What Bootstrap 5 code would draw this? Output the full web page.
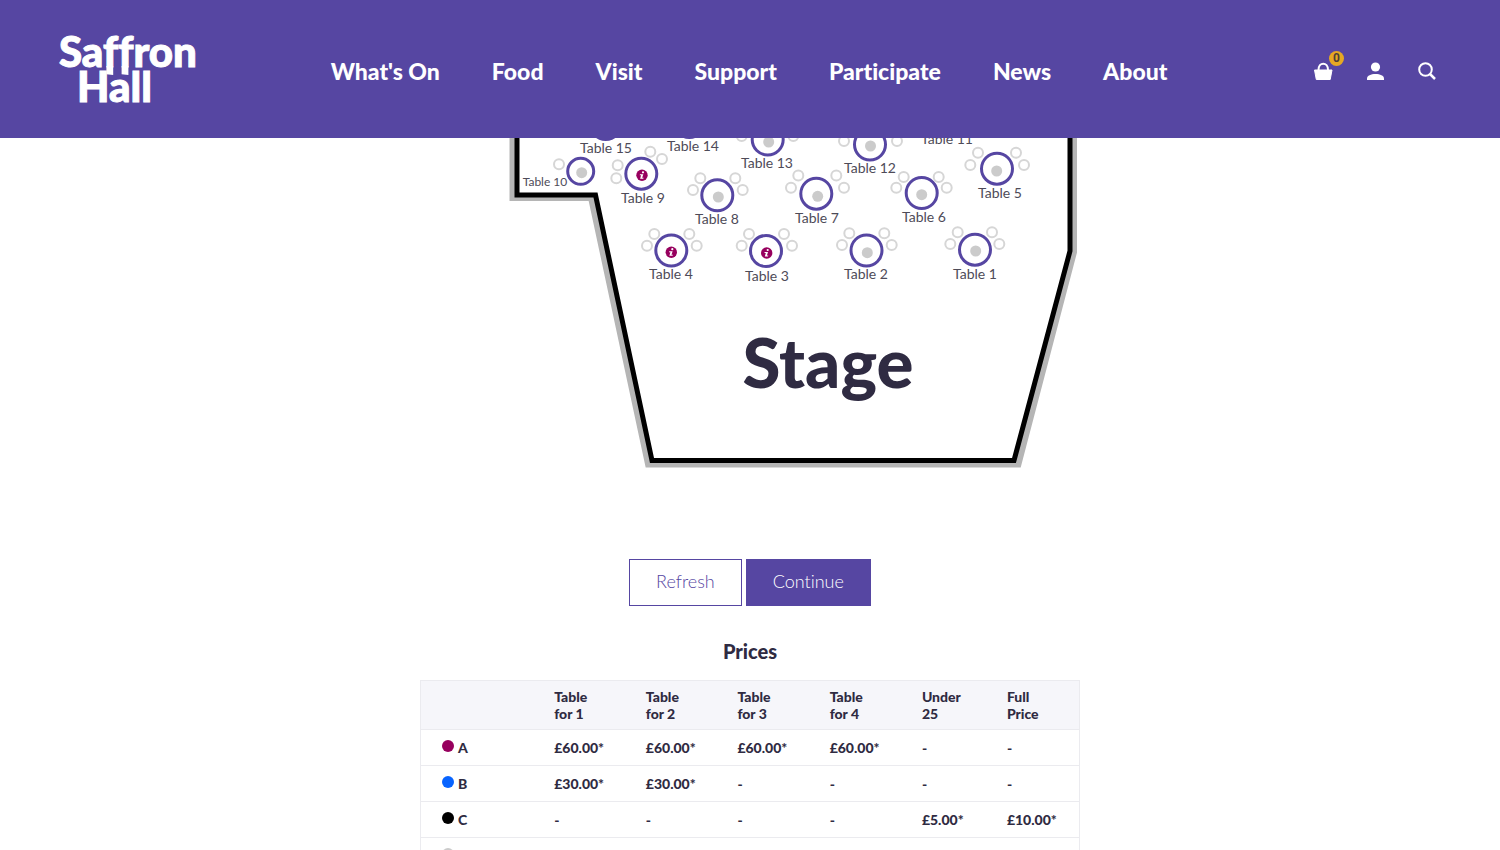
<!DOCTYPE html>
<html lang="en">
<head>
<meta charset="utf-8">
<meta name="viewport" content="width=device-width, initial-scale=1">
<title>Saffron Hall – Choose seats</title>
<link href="https://cdn.jsdelivr.net/npm/bootstrap@5.3.0/dist/css/bootstrap.min.css" rel="stylesheet">
<style>
  :root { --brand: #5646a2; --ink: #2f2b42; }
  body { font-family: Lato, "Liberation Sans", sans-serif; font-variant-ligatures: no-common-ligatures; color: var(--ink); }
  .site-header { background: var(--brand); height: 138px; padding: 4px 62px 0 60px; }
  .side { flex: 1 1 0; }
  .brand-logo { width: 142px; height: 80px; overflow: visible; }
  .brand-logo text { font-weight: 900; font-size: 42px; fill: #fff; stroke: #fff; stroke-width: 1; }
  .main-nav { gap: 52px; }
  .main-nav a { color: #fff; font-weight: 900; font-size: 23px; line-height: 28px; text-decoration: none; white-space: nowrap; }
  .tools { gap: 30px; }
  .tools a, .tools button { width: 22px; height: 22px; color: #fff; line-height: 0; }
  .cart-count { left: 17px; top: -9px; width: 15px; height: 15px; background: #e5a823; color: #4d3d3a; font: 700 12px/15px Roboto, sans-serif; }
  .booking { max-width: 660px; }
  .seat-map .edge { fill: none; stroke: #000; stroke-width: 5; }
  .seat-map .shade { fill: none; stroke: #b5b5b5; stroke-width: 7; }
  .seat-map .chairs { fill: #fff; stroke: #d6d6d6; stroke-width: 2; }
  .seat-map .tops { fill: #fff; stroke: var(--brand); stroke-width: 3; }
  .seat-map .dots { fill: #cbcbcb; }
  .seat-map .names { font-size: 14px; fill: #4e4b58; text-anchor: middle; }
  .seat-map .names .tight { font-size: 12px; }
  .seat-map .stage { font-size: 69px; font-weight: 900; fill: var(--ink); text-anchor: middle; }
  .act { height: 47px; padding: 0 26px 2px; font-size: 18px; font-weight: 300; font-variant-ligatures: no-common-ligatures; border: 1px solid #5646a2; border-radius: 0; color: var(--brand); background: #fff; }
  .act.solid { background: var(--brand); color: #fff; }
  .actions { margin-top: 51px; gap: 4px; }
  .prices-title { font-size: 20px; line-height: 24px; font-weight: 900; margin: 33px 0 17px; }
  .price-grid { table-layout: fixed; font-size: 14px; line-height: 17px; font-weight: 900; color: var(--ink); border: 1px solid #ebebef; margin: 0; }
  .price-grid th, .price-grid td { padding: 9px 0 9px 21px; color: var(--ink); font-weight: 900; border-bottom: 1px solid #ebebef; white-space: nowrap; }
  .price-grid thead th { background: #f6f6fa; padding: 7px 0 7px 21px; }
  .swatch { display: inline-block; width: 12px; height: 12px; border-radius: 50%; background: currentColor; margin-right: 4px; vertical-align: 1px; }
  .s-a { color: #97005e; } .s-b { color: #0864ff; } .s-c { color: #000; } .s-d { color: #cbcbcb; }
</style>
</head>
<body>
<header class="site-header fixed-top d-flex align-items-center">
  <div class="side">
    <a href="#" class="d-inline-block" aria-label="Saffron Hall">
      <svg class="brand-logo d-block" viewBox="60 32 142 80"><text x="59" y="71">Saffron</text><text x="77" y="106">Hall</text><path d="M106.400 70h6.800v9l-6.800-.8zM121.600 70h6.800v9l-6.800-.8z" fill="#fff"/></svg>
    </a>
  </div>
  <nav class="main-nav d-flex" aria-label="Main">
    <a href="#">What's On</a><a href="#">Food</a><a href="#">Visit</a><a href="#">Support</a><a href="#">Participate</a><a href="#">News</a><a href="#">About</a>
  </nav>
  <div class="side tools d-flex align-items-center justify-content-end">
    <a href="#" class="position-relative" aria-label="Basket"><svg width="22" height="22" viewBox="0 0 22 22"><path d="M2.500 10h17.500l-1.800 9.500H4.300z" fill="#fff" stroke="#fff" stroke-linejoin="round"/><path d="M6.500 10C6.500 1.500 16 1.500 16 10" fill="none" stroke="#fff" stroke-width="2"/></svg><span class="cart-count position-absolute rounded-circle text-center">0</span></a>
    <a href="#" aria-label="Account"><svg width="22" height="22" viewBox="0 0 22 22"><circle cx="11.500" cy="7" r="4.600" fill="#fff"/><path d="M3 20v-1.500c0-2.800 4-4.500 8.500-4.500s8.500 1.700 8.500 4.500V20z" fill="#fff"/></svg></a>
    <button type="button" class="btn border-0 p-0" aria-label="Search"><svg width="22" height="22" viewBox="0 0 22 22" fill="none" stroke="#fff" stroke-width="2"><circle cx="9.500" cy="9.500" r="6.300"/><path d="M14 14l5 5" stroke-width="2.500"/></svg></button>
  </div>
</header>

<main class="booking container-fluid p-0">
  <svg class="seat-map d-block w-100" viewBox="420 0 660 508" role="img" aria-label="Seating plan">
    <path class="shade" d="M513 90V197.500H591.500L648.500 464H1018L1073.500 252V90"/>
    <path class="edge" d="M517 90V195H595.500L652 460.500H1014L1070 251V90"/>
    <g class="chairs">
      <circle cx="559" cy="164.300" r="5"/>
      <circle cx="617.700" cy="165.300" r="5"/><circle cx="616.300" cy="178.300" r="5"/><circle cx="650.300" cy="151.700" r="5"/><circle cx="662" cy="159" r="5"/>
      <circle cx="693" cy="190" r="5"/><circle cx="700.300" cy="178.300" r="5"/><circle cx="735.300" cy="178.300" r="5"/><circle cx="742.700" cy="190" r="5"/>
      <circle cx="791" cy="187.700" r="5"/><circle cx="798.300" cy="175.500" r="5"/><circle cx="836.300" cy="175.500" r="5"/><circle cx="844" cy="187.700" r="5"/>
      <circle cx="896.300" cy="187.700" r="5"/><circle cx="903.700" cy="177" r="5"/><circle cx="938.700" cy="177" r="5"/><circle cx="946.700" cy="187.700" r="5"/>
      <circle cx="970.300" cy="165" r="5"/><circle cx="978" cy="152.700" r="5"/><circle cx="1016" cy="152.700" r="5"/><circle cx="1024" cy="165" r="5"/>
      <circle cx="647" cy="245.700" r="5"/><circle cx="654.300" cy="234" r="5"/><circle cx="689.300" cy="234" r="5"/><circle cx="696.700" cy="245.700" r="5"/>
      <circle cx="741.700" cy="245.700" r="5"/><circle cx="749" cy="234" r="5"/><circle cx="784" cy="234" r="5"/><circle cx="792" cy="245.700" r="5"/>
      <circle cx="842" cy="245" r="5"/><circle cx="849.300" cy="233.300" r="5"/><circle cx="884.300" cy="233.300" r="5"/><circle cx="891.700" cy="245" r="5"/>
      <circle cx="950.300" cy="244" r="5"/><circle cx="957.700" cy="232.300" r="5"/><circle cx="992" cy="232.300" r="5"/><circle cx="999.300" cy="244" r="5"/>
      <circle cx="741.700" cy="136" r="5"/><circle cx="793.300" cy="136" r="5"/><circle cx="844" cy="141" r="5"/><circle cx="897" cy="141" r="5"/>
    </g>
    <g class="tops">
      <circle cx="605.700" cy="124" r="15.500"/><circle cx="689.300" cy="122" r="15.500"/><circle cx="767.700" cy="139.500" r="15.500"/><circle cx="870" cy="144.500" r="15.500"/>
      <circle cx="580.700" cy="171.300" r="13"/><circle cx="641.300" cy="173.700" r="15.500"/><circle cx="717.300" cy="195.300" r="15.500"/><circle cx="816.300" cy="193.700" r="15.500"/>
      <circle cx="921.700" cy="193" r="15.500"/><circle cx="997" cy="168.700" r="15.500"/><circle cx="671.300" cy="250.500" r="15.500"/><circle cx="766" cy="251" r="15.500"/>
      <circle cx="866.500" cy="250.500" r="15.500"/><circle cx="975" cy="249.700" r="15.500"/>
    </g>
    <g class="dots">
      <circle cx="768.700" cy="142" r="5.500"/><circle cx="870.500" cy="146" r="5.500"/><circle cx="581.700" cy="172.700" r="5.500"/><circle cx="718.300" cy="197" r="5.500"/>
      <circle cx="817.700" cy="196.300" r="5.500"/><circle cx="921.700" cy="194.700" r="5.500"/><circle cx="996.700" cy="171" r="5.500"/><circle cx="867.300" cy="252.700" r="5.500"/><circle cx="975.700" cy="251" r="5.500"/>
    </g>
    <defs><g id="info"><circle r="5.700" fill="#97005e"/><circle cx="1" cy="-3" r="1.100" fill="#fff"/><path d="M-2-1H1.300L.2 2.500H1.600L1.300 3.500H-1.900L-.9 0H-2.300z" fill="#fff"/></g></defs>
    <use href="#info" x="642" y="175.300"/><use href="#info" x="671.300" y="252.200"/><use href="#info" x="766.700" y="253"/>
    <g class="names">
      <text x="606" y="153">Table 15</text><text x="693" y="151">Table 14</text><text x="767" y="168">Table 13</text><text x="870" y="173">Table 12</text><text x="947" y="144">Table 11</text>
      <text class="tight" x="545" y="186">Table 10</text><text x="643" y="203">Table 9</text><text x="717" y="224">Table 8</text><text x="817" y="223">Table 7</text><text x="924" y="222">Table 6</text><text x="1000" y="198">Table 5</text>
      <text x="671" y="279">Table 4</text><text x="767" y="281">Table 3</text><text x="866" y="279">Table 2</text><text x="975" y="279">Table 1</text>
    </g>
    <text class="stage" x="828" y="388">Stage</text>
  </svg>

  <div class="actions d-flex justify-content-center">
    <button type="button" class="act">Refresh</button>
    <button type="button" class="act solid">Continue</button>
  </div>

  <h2 class="prices-title text-center">Prices</h2>
  <table class="price-grid table">
    <colgroup><col style="width:17.100%"><col style="width:13.900%"><col style="width:13.900%"><col style="width:14%"><col style="width:14%"><col style="width:12.900%"><col></colgroup>
    <thead><tr><th></th><th scope="col">Table<br>for 1</th><th scope="col">Table<br>for 2</th><th scope="col">Table<br>for 3</th><th scope="col">Table<br>for 4</th><th scope="col">Under<br>25</th><th scope="col">Full<br>Price</th></tr></thead>
    <tbody>
      <tr><th scope="row"><span class="swatch s-a"></span>A</th><td>£60.00*</td><td>£60.00*</td><td>£60.00*</td><td>£60.00*</td><td>-</td><td>-</td></tr>
      <tr><th scope="row"><span class="swatch s-b"></span>B</th><td>£30.00*</td><td>£30.00*</td><td>-</td><td>-</td><td>-</td><td>-</td></tr>
      <tr><th scope="row"><span class="swatch s-c"></span>C</th><td>-</td><td>-</td><td>-</td><td>-</td><td>£5.00*</td><td>£10.00*</td></tr>
      <tr><th scope="row"><span class="swatch s-d"></span>D</th><td>-</td><td>-</td><td>-</td><td>-</td><td>-</td><td>-</td></tr>
    </tbody>
  </table>
</main>
<script src="https://cdn.jsdelivr.net/npm/bootstrap@5.3.0/dist/js/bootstrap.bundle.min.js"></script>
</body>
</html>
